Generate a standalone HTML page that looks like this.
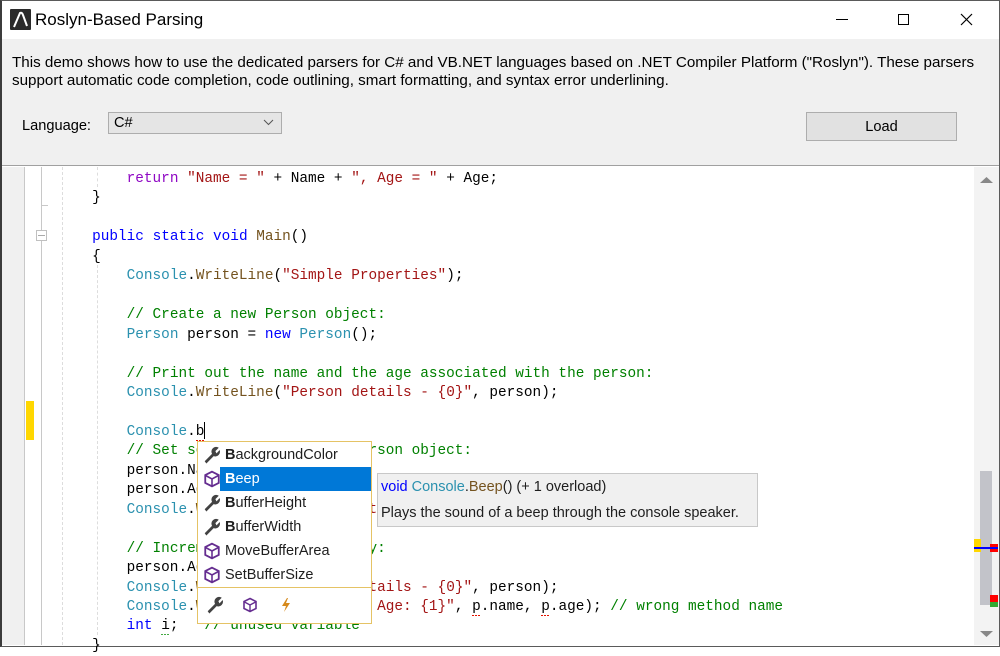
<!DOCTYPE html>
<html><head><meta charset="utf-8"><style>
*{margin:0;padding:0;box-sizing:border-box}
body{width:1000px;height:647px;overflow:hidden;background:#fff;font-family:"Liberation Sans",sans-serif;position:relative}
.abs{position:absolute}
.code{position:absolute;left:23px;top:170px;font-family:"Liberation Mono",monospace;font-size:14.4px;line-height:19.45px;white-space:pre;color:#000}
.k{color:#0000ff}.t{color:#2b91af}.m{color:#74531f}.s{color:#a31515}.c{color:#008000}.r{color:#8f08c4}
.sq{background:repeating-linear-gradient(90deg,#e51400 0 2px,transparent 2px 3px) left bottom/100% 1px no-repeat;padding-bottom:1px}
.sg{background:repeating-linear-gradient(90deg,#4a4 0 2px,transparent 2px 3px) left bottom/100% 1px no-repeat;padding-bottom:1px}
.it{position:absolute;left:0;height:24px;width:173px;font-size:14.5px;line-height:24px;padding-left:27px;color:#1e1e1e}
.it b{font-weight:bold}
.ic{position:absolute;left:5px;top:3px;width:18px;height:18px}
</style></head><body>
<div class="abs" style="left:0;top:0;width:1000px;height:647px;border:1px solid #5a5a5a;border-left:2px solid #3c3c3c"></div>
<div class="abs" style="left:2px;top:1px;width:997px;height:38px;background:#fff"></div>
<div class="abs" style="left:10px;top:9px;width:21px;height:21px;background:#2b2b2b;border-radius:1px">
<svg width="21" height="21" viewBox="0 0 21 21"><path d="M4 18 L10 4 Q12 3 13 6 L17 17" stroke="#fff" stroke-width="2" fill="none"/></svg></div>
<div class="abs" style="left:35px;top:10px;font-size:17px;color:#000">Roslyn-Based Parsing</div>
<div class="abs" style="left:836px;top:19px;width:12px;height:1px;background:#000"></div>
<div class="abs" style="left:898px;top:14px;width:11px;height:11px;border:1px solid #000"></div>
<svg class="abs" style="left:960px;top:13px" width="13" height="13"><path d="M1 1L12 12M12 1L1 12" stroke="#000" stroke-width="1.2"/></svg>
<div class="abs" style="left:2px;top:39px;width:997px;height:127px;background:#f0f0f0;border-bottom:1px solid #a0a0a0"></div>
<div class="abs" style="left:12px;top:54px;font-size:15.2px;line-height:17.5px;color:#000;width:985px">This demo shows how to use the dedicated parsers for C# and VB.NET languages based on .NET Compiler Platform ("Roslyn"). These parsers support automatic code completion, code outlining, smart formatting, and syntax error underlining.</div>
<div class="abs" style="left:22px;top:118px;font-size:14.6px">Language:</div>
<div class="abs" style="left:108px;top:112px;width:174px;height:22px;background:#e5e5e5;border:1px solid #adadad"></div>
<div class="abs" style="left:114px;top:115px;font-size:14.6px">C#</div>
<svg class="abs" style="left:263px;top:119px" width="11" height="7"><path d="M1 1L5.5 5.5L10 1" stroke="#555" fill="none"/></svg>
<div class="abs" style="left:806px;top:112px;width:151px;height:29px;background:#e1e1e1;border:1px solid #adadad;text-align:center;font-size:14.6px;line-height:29px">Load</div>
<div class="abs" style="left:2px;top:167px;width:23px;height:478px;background:#f0f0f0;border-right:1px solid #c8c8c8"></div>
<div class="abs" style="left:26px;top:401px;width:8px;height:39px;background:#ffd700"></div>
<div class="abs" style="left:41px;top:167px;width:1px;height:478px;background:#c8c8c8"></div>
<div class="abs" style="left:42px;top:205px;width:6px;height:1px;background:#c8c8c8"></div>
<div class="abs" style="left:36px;top:230px;width:11px;height:11px;background:#fff;border:1px solid #c0c0c0"></div>
<div class="abs" style="left:38px;top:235px;width:7px;height:1px;background:#aaa"></div>
<div class="abs" style="left:62px;top:167px;width:0;height:478px;border-left:1px dashed #ddd"></div>
<div class="abs" style="left:97px;top:167px;width:0;height:20px;border-left:1px dashed #ddd"></div>
<div class="abs" style="left:97px;top:265px;width:0;height:370px;border-left:1px dashed #ddd"></div>
<div class="code"><span>            </span><span class="r">return</span> <span class="s">"Name = "</span> + Name + <span class="s">", Age = "</span> + Age;
        }

        <span class="k">public</span> <span class="k">static</span> <span class="k">void</span> <span class="m">Main</span>()
        {
            <span class="t">Console</span>.<span class="m">WriteLine</span>(<span class="s">"Simple Properties"</span>);

            <span class="c">// Create a new Person object:</span>
            <span class="t">Person</span> person = <span class="k">new</span> <span class="t">Person</span>();

            <span class="c">// Print out the name and the age associated with the person:</span>
            <span class="t">Console</span>.<span class="m">WriteLine</span>(<span class="s">"Person details - {0}"</span>, person);

            <span class="t">Console</span>.<span class="sq">b</span>
            <span class="c">// Set some values on the person object:</span>
            person.Name = <span class="s">"Joe"</span>;
            person.Age = 99;
            <span class="t">Console</span>.<span class="m">WriteLine</span>(<span class="s">"Person details - {0}"</span>, person);

            <span class="c">// Increment the Age property:</span>
            person.Age += 1;
            <span class="t">Console</span>.<span class="m">WriteLine</span>(<span class="s">"Person details - {0}"</span>, person);
            <span class="t">Console</span>.<span class="m">WritLine</span>(<span class="s">"Name: {0}, Age: {1}"</span>, <span class="sq">p</span>.name, <span class="sq">p</span>.age); <span class="c">// wrong method name</span>
            <span class="k">int</span> <span class="sg">i</span>;   <span class="c">// unused variable</span>
        }</div>
<div class="abs" style="left:204px;top:422px;width:1px;height:17px;background:#000"></div>
<div class="abs" style="left:974px;top:167px;width:25px;height:478px;background:#f3f3f3"></div>
<svg class="abs" style="left:980px;top:176px" width="13" height="8"><path d="M0 7L6.5 1L13 7Z" fill="#888"/></svg>
<svg class="abs" style="left:980px;top:630px" width="13" height="8"><path d="M0 1L6.5 7L13 1Z" fill="#888"/></svg>
<div class="abs" style="left:980px;top:471px;width:12px;height:134px;background:#c2c3c9"></div>
<div class="abs" style="left:974px;top:539px;width:7px;height:13px;background:#ffd700"></div>
<div class="abs" style="left:990px;top:544px;width:8px;height:8px;background:#f00"></div>
<div class="abs" style="left:974px;top:547px;width:24px;height:2px;background:#00f"></div>
<div class="abs" style="left:990px;top:595px;width:8px;height:7px;background:#f00"></div>
<div class="abs" style="left:990px;top:602px;width:8px;height:5px;background:#3a3"></div>
<div class="abs" style="left:197px;top:441px;width:175px;height:183px;background:#fff;border:1px solid #e5c365">
 <div class="abs" style="left:22px;top:25px;width:151px;height:24px;background:#0078d7"></div>
 <div class="it" style="top:1px"><svg class="ic" viewBox="0 0 16 16"><path d="M1.5 13.5L8 7A4.2 4.2 0 0 1 14 1.5L11 4.5L12 6.5L14.8 3.5A4.2 4.2 0 0 1 9.5 9L3 15.5Z" fill="#424242"/></svg><b>B</b>ackgroundColor</div>
 <div class="it" style="top:25px;color:#fff"><svg class="ic" viewBox="0 0 16 16"><path d="M8 1.5L14 4.5V11.5L8 14.5L2 11.5V4.5Z" fill="#fff" stroke="#652d90" stroke-width="1.6"/><path d="M2.5 5L8 8L13.5 5M8 8V14" stroke="#652d90" stroke-width="1.4" fill="none"/></svg><b>B</b>eep</div>
 <div class="it" style="top:49px"><svg class="ic" viewBox="0 0 16 16"><path d="M1.5 13.5L8 7A4.2 4.2 0 0 1 14 1.5L11 4.5L12 6.5L14.8 3.5A4.2 4.2 0 0 1 9.5 9L3 15.5Z" fill="#424242"/></svg><b>B</b>ufferHeight</div>
 <div class="it" style="top:73px"><svg class="ic" viewBox="0 0 16 16"><path d="M1.5 13.5L8 7A4.2 4.2 0 0 1 14 1.5L11 4.5L12 6.5L14.8 3.5A4.2 4.2 0 0 1 9.5 9L3 15.5Z" fill="#424242"/></svg><b>B</b>ufferWidth</div>
 <div class="it" style="top:97px"><svg class="ic" viewBox="0 0 16 16"><path d="M8 1.5L14 4.5V11.5L8 14.5L2 11.5V4.5Z" fill="#fff" stroke="#652d90" stroke-width="1.6"/><path d="M2.5 5L8 8L13.5 5M8 8V14" stroke="#652d90" stroke-width="1.4" fill="none"/></svg>MoveBufferArea</div>
 <div class="it" style="top:121px"><svg class="ic" viewBox="0 0 16 16"><path d="M8 1.5L14 4.5V11.5L8 14.5L2 11.5V4.5Z" fill="#fff" stroke="#652d90" stroke-width="1.6"/><path d="M2.5 5L8 8L13.5 5M8 8V14" stroke="#652d90" stroke-width="1.4" fill="none"/></svg>SetBufferSize</div>
 <div class="abs" style="left:0;top:145px;width:173px;height:1px;background:#e5c365"></div>
 <svg class="abs" style="left:8px;top:154px" width="18" height="18" viewBox="0 0 16 16"><path d="M1.5 13.5L8 7A4.2 4.2 0 0 1 14 1.5L11 4.5L12 6.5L14.8 3.5A4.2 4.2 0 0 1 9.5 9L3 15.5Z" fill="#424242"/></svg>
 <svg class="abs" style="left:44px;top:155px" width="16" height="16" viewBox="0 0 16 16"><path d="M8 1.5L14 4.5V11.5L8 14.5L2 11.5V4.5Z" fill="#fff" stroke="#652d90" stroke-width="1.6"/><path d="M2.5 5L8 8L13.5 5M8 8V14" stroke="#652d90" stroke-width="1.4" fill="none"/></svg>
 <svg class="abs" style="left:80px;top:155px" width="16" height="16" viewBox="0 0 16 16"><path d="M9 1L4 9H8L6 15L12 6H8L10 1Z" fill="#d68a1c"/></svg>
</div>
<div class="abs" style="left:377px;top:473px;width:381px;height:54px;background:#f0f0f0;border:1px solid #c8c8c8"></div>
<div class="abs" style="left:381px;top:479px;font-size:14.5px;color:#1e1e1e"><span style="color:#0000ff">void</span> <span style="color:#2b91af">Console</span>.<span style="color:#74531f">Beep</span>() (+ 1 overload)</div>
<div class="abs" style="left:381px;top:505px;font-size:14.5px;color:#1e1e1e">Plays the sound of a beep through the console speaker.</div>
</body></html>
